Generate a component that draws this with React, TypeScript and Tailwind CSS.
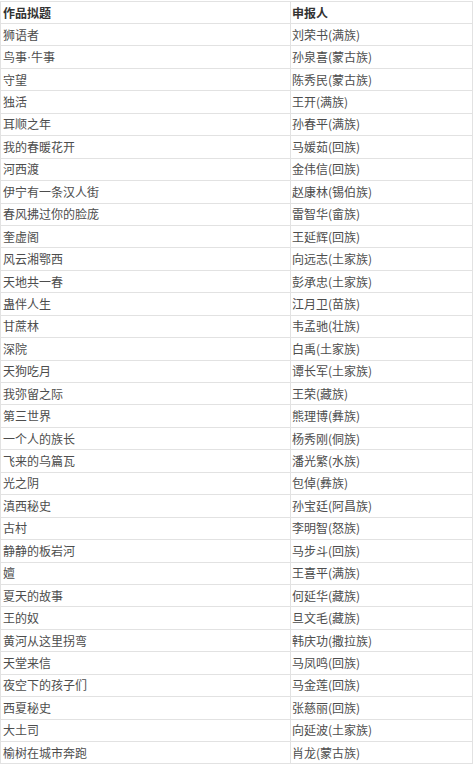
import React from "react";

const rows: [React.ReactNode, string][] = [
  ["狮语者", "刘荣书(满族)"],
  [
    <>
      鸟事<span style={{ fontFamily: '"Liberation Sans", sans-serif' }}>·</span>牛事
    </>,
    "孙泉喜(蒙古族)",
  ],
  ["守望", "陈秀民(蒙古族)"],
  ["独活", "王开(满族)"],
  ["耳顺之年", "孙春平(满族)"],
  ["我的春暖花开", "马媛茹(回族)"],
  ["河西渡", "金伟信(回族)"],
  ["伊宁有一条汉人街", "赵康林(锡伯族)"],
  ["春风拂过你的脸庞", "雷智华(畲族)"],
  ["奎虚阁", "王延辉(回族)"],
  ["风云湘鄂西", "向远志(土家族)"],
  ["天地共一春", "彭承忠(土家族)"],
  ["蛊伴人生", "江月卫(苗族)"],
  ["甘蔗林", "韦孟驰(壮族)"],
  ["深院", "白禹(土家族)"],
  ["天狗吃月", "谭长军(土家族)"],
  ["我弥留之际", "王荣(藏族)"],
  ["第三世界", "熊理博(彝族)"],
  ["一个人的族长", "杨秀刚(侗族)"],
  ["飞来的乌篇瓦", "潘光繁(水族)"],
  ["光之阴", "包倬(彝族)"],
  ["滇西秘史", "孙宝廷(阿昌族)"],
  ["古村", "李明智(怒族)"],
  ["静静的板岩河", "马步斗(回族)"],
  ["嬗", "王喜平(满族)"],
  ["夏天的故事", "何延华(藏族)"],
  ["王的奴", "旦文毛(藏族)"],
  ["黄河从这里拐弯", "韩庆功(撒拉族)"],
  ["天堂来信", "马凤鸣(回族)"],
  ["夜空下的孩子们", "马金莲(回族)"],
  ["西夏秘史", "张慈丽(回族)"],
  ["大土司", "向延波(土家族)"],
  ["榆树在城市奔跑", "肖龙(蒙古族)"],
];

export default function App() {
  return (
    <div
      className="w-[474px] h-[765px] bg-white overflow-hidden text-[12px] text-[#4d4d4d]"
      style={{ fontFamily: '"Noto Sans CJK SC", "Noto Sans", sans-serif' }}
    >
      <div className="w-[473px] border-l border-r border-t border-[#e2e2e2] mt-[1px]">
        <div className="flex h-[22px] border-b border-[#e2e2e2] font-bold text-[#333]">
          <div className="w-[290px] border-r border-[#e2e2e2] pl-[2px] flex items-center">作品拟题</div>
          <div className="flex-1 pl-[1px] flex items-center">申报人</div>
        </div>
        {rows.map(([a, b], i) => (
          <div key={i} className="flex h-[22.45px] border-b border-[#e2e2e2]">
            <div className="w-[290px] border-r border-[#e2e2e2] pl-[2px] flex items-center">{a}</div>
            <div className="flex-1 pl-[1px] flex items-center">{b}</div>
          </div>
        ))}
      </div>
    </div>
  );
}
